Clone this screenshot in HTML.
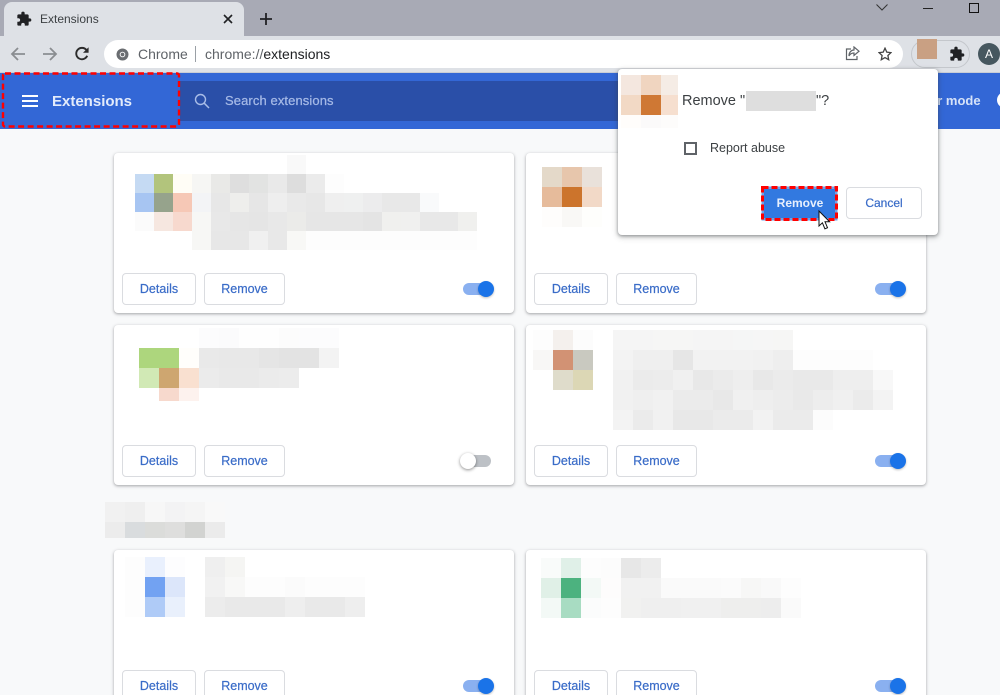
<!DOCTYPE html>
<html><head><meta charset="utf-8"><title>Extensions</title>
<style>
html,body{margin:0;padding:0;width:1000px;height:695px;overflow:hidden;background:#f8f9fa;font-family:"Liberation Sans",sans-serif}
#root{position:relative;width:1000px;height:695px;overflow:hidden;background:#f8f9fa}
.abs,.card,.btn,.tg,.tg i,.tg b{position:absolute}
#strip{position:absolute;left:0;top:0;width:1000px;height:36px;background:#a8aab5}
#tab{position:absolute;left:4px;top:2px;width:240px;height:34px;background:#dee1e6;border-radius:8px 8px 0 0}
#bar{position:absolute;left:0;top:36px;width:1000px;height:36px;background:#dee1e6}
#line{position:absolute;left:0;top:72px;width:1000px;height:1px;background:#c9cdd6}
#omni{position:absolute;left:104px;top:40px;width:799px;height:28px;background:#fff;border-radius:14px}
#pill{position:absolute;left:911px;top:40px;width:59px;height:28px;border:1px solid #c4c7cc;border-radius:15px;box-sizing:border-box}
#hdr{position:absolute;left:0;top:73px;width:1000px;height:56px;background:#3367d6}
#search{position:absolute;left:180px;top:81px;width:470px;height:40px;background:#2a4fa8}
.t{position:absolute;white-space:nowrap;line-height:1}
.card{width:400px;height:160px;background:#fff;border-radius:4px;box-shadow:0 1px 2px rgba(60,64,67,.3),0 1px 3px 1px rgba(60,64,67,.13)}
.btn{box-sizing:border-box;height:32px;top:120px;border:1px solid #dadce0;border-radius:4px;background:#fff;color:#3a6cc8;font-size:12.5px;line-height:30px;text-align:center;-webkit-text-stroke:.2px #3a6cc8}
.d{left:8px;width:74px}.r{left:90px;width:81px}
.tg{left:349px;top:130px;width:30px;height:12px}
.tg i{left:0;top:0;width:28px;height:12px;border-radius:6px;background:#8ab0f0}
.tg b{left:15px;top:-2px;width:16px;height:16px;border-radius:50%;background:#1a73e8;box-shadow:0 1px 2px rgba(0,0,0,.25)}
.tg.off i{background:#bdc1c6;left:4px;width:24px}
.tg.off b{left:-3px;background:#fff;box-shadow:0 1px 3px rgba(0,0,0,.45)}
#mos{position:absolute;left:0;top:0}
.a rect{width:19px;height:19px}
.b rect{width:20px;height:20px}
.c rect{width:20px;height:13px}
.e rect{width:20px;height:16px}
#dlg{position:absolute;left:618px;top:69px;width:320px;height:166px;background:#fff;border-radius:4px;box-shadow:0 1px 3px rgba(60,64,67,.5),0 2px 6px 1px rgba(60,64,67,.2)}
</style></head><body><div id="root">
<div id="strip"></div>
<div id="tab"></div>
<div id="bar"></div>
<div id="line"></div>
<div id="omni"></div>
<div id="pill"></div>
<div id="hdr"></div>
<div id="search"></div>

<svg class="abs" style="left:16px;top:11px" width="16" height="16" viewBox="0 0 24 24"><path fill="#202124" d="M20.5 11H19V7a2 2 0 0 0-2-2h-4V3.5a2.5 2.5 0 0 0-5 0V5H4a2 2 0 0 0-2 2v3.8h1.5a2.7 2.7 0 0 1 0 5.4H2V20a2 2 0 0 0 2 2h3.8v-1.5a2.7 2.7 0 0 1 5.4 0V22H17a2 2 0 0 0 2-2v-4h1.5a2.5 2.5 0 0 0 0-5z"/></svg>
<div class="t" style="left:40px;top:13px;font-size:12px;color:#3c4043">Extensions</div>
<svg class="abs" style="left:222px;top:13px" width="12" height="12" viewBox="0 0 12 12"><path d="M2 2l8 8M10 2l-8 8" stroke="#202124" stroke-width="1.6"/></svg>
<svg class="abs" style="left:259px;top:12px" width="14" height="14" viewBox="0 0 14 14"><path d="M7 1v12M1 7h12" stroke="#202124" stroke-width="1.8"/></svg>
<svg class="abs" style="left:875px;top:3px" width="14" height="9" viewBox="0 0 14 9"><path d="M1.5 1.5L7 7l5.5-5.5" stroke="#333" stroke-width="1" fill="none"/></svg>
<div class="abs" style="left:923px;top:8px;width:10px;height:1px;background:#222"></div>
<div class="abs" style="left:969px;top:3px;width:8px;height:8px;border:1px solid #111"></div>

<svg class="abs" style="left:10px;top:47px" width="16" height="14" viewBox="0 0 16 14"><path d="M15 7H2M8 1L2 7l6 6" stroke="#8a8d91" stroke-width="1.8" fill="none"/></svg>
<svg class="abs" style="left:42px;top:47px" width="16" height="14" viewBox="0 0 16 14"><path d="M1 7h13M8 1l6 6-6 6" stroke="#8a8d91" stroke-width="1.8" fill="none"/></svg>
<svg class="abs" style="left:74px;top:46px" width="16" height="16" viewBox="0 0 16 16"><path d="M13.2 9.8A5.7 5.7 0 1 1 12.4 4" stroke="#2b2b2b" stroke-width="1.9" fill="none"/><path d="M14.6 1.2v5.6H9z" fill="#2b2b2b"/></svg>
<svg class="abs" style="left:116px;top:48px" width="13" height="13" viewBox="0 0 13 13"><circle cx="6.5" cy="6.5" r="6" fill="#6a6d71"/><circle cx="6.5" cy="6.5" r="2.8" fill="#fff"/><circle cx="6.5" cy="6.5" r="1.9" fill="#6a6d71"/></svg>
<div class="t" style="left:138px;top:47px;font-size:14px;color:#5f6368">Chrome</div>
<div class="abs" style="left:195px;top:46px;width:1px;height:16px;background:#9aa0a6"></div>
<div class="t" style="left:205px;top:47px;font-size:14px;color:#5f6368">chrome://<span style="color:#202124">extensions</span></div>
<svg class="abs" style="left:845px;top:46px" width="15" height="15" viewBox="0 0 15 15"><path d="M6 3H1.5v10.5H12V10" stroke="#5f6368" stroke-width="1.2" fill="none"/><path d="M9 1l5 4.2-5 4.2V7C6.5 7 5 8 4 10c0-3.5 2-6 5-6z" stroke="#5f6368" stroke-width="1.2" fill="none"/></svg>
<svg class="abs" style="left:878px;top:47px" width="14" height="14" viewBox="0 0 14 14"><path d="M7 1.2l1.8 3.9 4.2.5-3.1 2.9.8 4.2L7 10.6l-3.7 2.1.8-4.2L1 5.6l4.2-.5z" stroke="#444" stroke-width="1.3" fill="none"/></svg>
<div class="abs" style="left:917px;top:39px;width:20px;height:20px;background:#c9a083"></div>
<svg class="abs" style="left:949px;top:46px" width="16" height="16" viewBox="0 0 24 24"><path fill="#202124" d="M20.5 11H19V7a2 2 0 0 0-2-2h-4V3.5a2.5 2.5 0 0 0-5 0V5H4a2 2 0 0 0-2 2v3.8h1.5a2.7 2.7 0 0 1 0 5.4H2V20a2 2 0 0 0 2 2h3.8v-1.5a2.7 2.7 0 0 1 5.4 0V22H17a2 2 0 0 0 2-2v-4h1.5a2.5 2.5 0 0 0 0-5z"/></svg>
<div class="abs" style="left:978px;top:43px;width:22px;height:22px;border-radius:50%;background:#46575f;color:#fff;font-size:12px;line-height:22px;text-align:center">A</div>

<div class="abs" style="left:22px;top:95px;width:16px;height:2px;background:#fff"></div>
<div class="abs" style="left:22px;top:100px;width:16px;height:2px;background:#fff"></div>
<div class="abs" style="left:22px;top:105px;width:16px;height:2px;background:#fff"></div>
<div class="t" style="left:52px;top:94px;font-size:15px;font-weight:bold;color:#e3ebfb">Extensions</div>
<svg class="abs" style="left:194px;top:93px" width="16" height="16" viewBox="0 0 16 16"><circle cx="6.5" cy="6.5" r="5" stroke="#a9bde8" stroke-width="1.4" fill="none"/><path d="M10.2 10.2L15 15" stroke="#a9bde8" stroke-width="1.5"/></svg>
<div class="t" style="left:225px;top:94px;font-size:13px;letter-spacing:.1px;color:#a5b9e6;-webkit-text-stroke:.25px #a5b9e6">Search extensions</div>
<div class="t" style="left:930px;top:94px;font-size:13px;font-weight:bold;color:#d6e2f8">er mode</div>
<div class="abs" style="left:997px;top:92px;width:16px;height:16px;border-radius:50%;background:#fff"></div>

<div class="card" style="left:114px;top:153px"><div class="btn d">Details</div><div class="btn r">Remove</div><div class="tg"><i></i><b></b></div></div>
<div class="card" style="left:526px;top:153px"><div class="btn d">Details</div><div class="btn r">Remove</div><div class="tg"><i></i><b></b></div></div>
<div class="card" style="left:114px;top:325px"><div class="btn d">Details</div><div class="btn r">Remove</div><div class="tg off"><i></i><b></b></div></div>
<div class="card" style="left:526px;top:325px"><div class="btn d">Details</div><div class="btn r">Remove</div><div class="tg"><i></i><b></b></div></div>
<div class="card" style="left:114px;top:550px"><div class="btn d">Details</div><div class="btn r">Remove</div><div class="tg"><i></i><b></b></div></div>
<div class="card" style="left:526px;top:550px"><div class="btn d">Details</div><div class="btn r">Remove</div><div class="tg"><i></i><b></b></div></div>

<svg id="mos" width="1000" height="695">
<g class="a">
<rect x="135" y="174" fill="#c5daf3"/><rect x="154" y="174" fill="#b2c47c"/><rect x="173" y="174" fill="#fffdf6"/><rect x="192" y="174" fill="#f6f6f4"/><rect x="211" y="174" fill="#e9e9e7"/><rect x="230" y="174" fill="#dedede"/><rect x="249" y="174" fill="#e2e3e2"/><rect x="268" y="174" fill="#e9e9e9"/><rect x="287" y="174" fill="#dddddd"/><rect x="306" y="174" fill="#ebebeb"/><rect x="325" y="174" fill="#fdfdfd"/>
<rect x="135" y="193" fill="#a7c5f2"/><rect x="154" y="193" fill="#96a38c"/><rect x="173" y="193" fill="#f6c8b6"/><rect x="192" y="193" fill="#f3f4f6"/><rect x="211" y="193" fill="#e7e7e7"/><rect x="230" y="193" fill="#eeeeec"/><rect x="249" y="193" fill="#e6e6e6"/><rect x="268" y="193" fill="#eeeeee"/><rect x="287" y="193" fill="#e9e9e9"/><rect x="306" y="193" fill="#e7e7e7"/><rect x="325" y="193" fill="#efefef"/><rect x="344" y="193" fill="#eff0f0"/><rect x="363" y="193" fill="#ececed"/><rect x="382" y="193" fill="#e8e8e8"/><rect x="401" y="193" fill="#e8e8e8"/><rect x="420" y="193" fill="#f9fafb"/>
<rect x="135" y="212" fill="#fbfbfb"/><rect x="154" y="212" fill="#f6e7e0"/><rect x="173" y="212" fill="#f7d9ce"/><rect x="192" y="212" fill="#f7f7f5"/><rect x="211" y="212" fill="#e8e8e8"/><rect x="230" y="212" fill="#e6e6e6"/><rect x="249" y="212" fill="#e5e5e5"/><rect x="268" y="212" fill="#e8e8e8"/><rect x="287" y="212" fill="#ebebe9"/><rect x="306" y="212" fill="#e6e6e6"/><rect x="325" y="212" fill="#e6e6e6"/><rect x="344" y="212" fill="#e6e6e6"/><rect x="363" y="212" fill="#e4e4e4"/><rect x="382" y="212" fill="#f0f0ee"/><rect x="401" y="212" fill="#f0f0ef"/><rect x="420" y="212" fill="#e8e8e8"/><rect x="439" y="212" fill="#e8e8e8"/><rect x="458" y="212" fill="#f0f0ee"/>
<rect x="192" y="231" fill="#f7f7f5"/><rect x="211" y="231" fill="#e7e7e7"/><rect x="230" y="231" fill="#e7e7e7"/><rect x="249" y="231" fill="#f0f0f0"/><rect x="268" y="231" fill="#e8e8e8"/><rect x="287" y="231" fill="#f8f8f6"/><rect x="306" y="231" fill="#fdfdfd"/><rect x="325" y="231" fill="#fdfdfd"/><rect x="344" y="231" fill="#fdfdfd"/><rect x="363" y="231" fill="#fdfdfd"/><rect x="382" y="231" fill="#fdfdfd"/><rect x="401" y="231" fill="#fdfdfd"/><rect x="420" y="231" fill="#fdfdfd"/><rect x="439" y="231" fill="#fdfdfd"/><rect x="458" y="231" fill="#fdfdfd"/>
<rect x="287" y="155" fill="#f9f9f9"/>
</g>
<g class="b">
<rect x="542" y="167" fill="#e4d9c9"/><rect x="562" y="167" fill="#e7c6ac"/><rect x="582" y="167" fill="#e9e1da"/>
<rect x="542" y="187" fill="#e6bb9b"/><rect x="562" y="187" fill="#cc742c"/><rect x="582" y="187" fill="#f2d9c7"/>
<rect x="542" y="207" fill="#fefdfc"/><rect x="562" y="207" fill="#f9f8f6"/><rect x="582" y="207" fill="#fefefc"/>

<rect x="199" y="328" fill="#fcfcfd"/><rect x="219" y="328" fill="#fbfbfc"/><rect x="239" y="328" fill="#fefefe"/><rect x="259" y="328" fill="#fefefe"/><rect x="279" y="328" fill="#fcfcfc"/><rect x="299" y="328" fill="#fcfcfd"/><rect x="319" y="328" fill="#fcfcfd"/>
<rect x="139" y="348" fill="#add67d"/><rect x="159" y="348" fill="#add67d"/><rect x="179" y="348" fill="#fffefb"/><rect x="199" y="348" fill="#e9e9e9"/><rect x="219" y="348" fill="#e8e8e8"/><rect x="239" y="348" fill="#e8e8e8"/><rect x="259" y="348" fill="#e5e5e5"/><rect x="279" y="348" fill="#e3e3e3"/><rect x="299" y="348" fill="#e3e3e3"/><rect x="319" y="348" fill="#f3f3f3"/>
<rect x="139" y="368" fill="#d1e9b5"/><rect x="159" y="368" fill="#cea670"/><rect x="179" y="368" fill="#f9e0d0"/><rect x="199" y="368" fill="#ebebeb"/><rect x="219" y="368" fill="#e9e9e9"/><rect x="239" y="368" fill="#e9e9e9"/><rect x="259" y="368" fill="#ebebeb"/><rect x="279" y="368" fill="#ececec"/>

<rect x="533" y="330" fill="#fdfdfd"/><rect x="553" y="330" fill="#f4f0ed"/><rect x="573" y="330" fill="#fcfcfc"/>
<rect x="533" y="350" fill="#f8f7f6"/><rect x="553" y="350" fill="#d29274"/><rect x="573" y="350" fill="#c9c9c0"/>
<rect x="553" y="370" fill="#dfdccb"/><rect x="573" y="370" fill="#dcd7b5"/>
<rect x="613" y="330" fill="#f5f5f5"/><rect x="633" y="330" fill="#f5f5f5"/><rect x="653" y="330" fill="#f6f6f5"/><rect x="673" y="330" fill="#f6f6f5"/><rect x="693" y="330" fill="#f5f5f5"/><rect x="713" y="330" fill="#f5f5f5"/><rect x="733" y="330" fill="#f5f6f6"/><rect x="753" y="330" fill="#f6f6f6"/><rect x="773" y="330" fill="#f6f6f5"/>
<rect x="613" y="350" fill="#f3f3f3"/><rect x="633" y="350" fill="#efefef"/><rect x="653" y="350" fill="#efefef"/><rect x="673" y="350" fill="#e6e6e6"/><rect x="693" y="350" fill="#f2f2f2"/><rect x="713" y="350" fill="#f2f2f2"/><rect x="733" y="350" fill="#f2f2f2"/><rect x="753" y="350" fill="#f1f1f1"/><rect x="773" y="350" fill="#eeeeee"/><rect x="793" y="350" fill="#fdfdfd"/><rect x="813" y="350" fill="#fdfdfd"/><rect x="833" y="350" fill="#fdfdfd"/><rect x="853" y="350" fill="#fdfdfd"/>
<rect x="613" y="370" fill="#f1f1f1"/><rect x="633" y="370" fill="#ebebeb"/><rect x="653" y="370" fill="#ececec"/><rect x="673" y="370" fill="#f0f0f0"/><rect x="693" y="370" fill="#e8e8e8"/><rect x="713" y="370" fill="#ebebeb"/><rect x="733" y="370" fill="#eeeeee"/><rect x="753" y="370" fill="#e8e8e8"/><rect x="773" y="370" fill="#ebebeb"/><rect x="793" y="370" fill="#e9e9e9"/><rect x="813" y="370" fill="#e9e9e9"/><rect x="833" y="370" fill="#eeeeee"/><rect x="853" y="370" fill="#eeeeee"/><rect x="873" y="370" fill="#f8f8f8"/>
<rect x="613" y="390" fill="#f1f1f1"/><rect x="633" y="390" fill="#efefef"/><rect x="653" y="390" fill="#f1f1f1"/><rect x="673" y="390" fill="#ebebeb"/><rect x="693" y="390" fill="#ebebeb"/><rect x="713" y="390" fill="#e8e8e8"/><rect x="733" y="390" fill="#f0f0f0"/><rect x="753" y="390" fill="#eeeeee"/><rect x="773" y="390" fill="#ececec"/><rect x="793" y="390" fill="#e9e9e9"/><rect x="813" y="390" fill="#ededed"/><rect x="833" y="390" fill="#f0f0f0"/><rect x="853" y="390" fill="#ebebeb"/><rect x="873" y="390" fill="#f3f3f3"/>
<rect x="613" y="410" fill="#f3f3f3"/><rect x="633" y="410" fill="#ebebeb"/><rect x="653" y="410" fill="#f1f1f1"/><rect x="673" y="410" fill="#e8e8e8"/><rect x="693" y="410" fill="#e8e8e8"/><rect x="713" y="410" fill="#ebebeb"/><rect x="733" y="410" fill="#ebebeb"/><rect x="753" y="410" fill="#f2f2f2"/><rect x="773" y="410" fill="#ebebeb"/><rect x="793" y="410" fill="#ebebeb"/><rect x="813" y="410" fill="#fcfcfc"/>

<rect x="105" y="502" fill="#f1f1f1"/><rect x="125" y="502" fill="#efefef"/><rect x="145" y="502" fill="#f7f7f7"/><rect x="165" y="502" fill="#f3f3f4"/><rect x="185" y="502" fill="#f5f5f5"/><rect x="205" y="502" fill="#f9f9f9"/>

<rect x="125" y="557" fill="#fdfdfd"/><rect x="145" y="557" fill="#e9f0fd"/><rect x="165" y="557" fill="#fdfdfe"/>
<rect x="125" y="577" fill="#fdfdfd"/><rect x="145" y="577" fill="#72a2f2"/><rect x="165" y="577" fill="#dce6fa"/>
<rect x="125" y="597" fill="#fdfdfd"/><rect x="145" y="597" fill="#afcbf7"/><rect x="165" y="597" fill="#e9f0fc"/>
<rect x="205" y="557" fill="#efefef"/><rect x="225" y="557" fill="#f5f5f3"/>
<rect x="205" y="577" fill="#f1f1f1"/><rect x="225" y="577" fill="#f8f8f7"/><rect x="245" y="577" fill="#fdfdfd"/><rect x="265" y="577" fill="#fdfdfd"/><rect x="285" y="577" fill="#fbfbfb"/><rect x="305" y="577" fill="#fdfdfd"/><rect x="325" y="577" fill="#fdfdfd"/><rect x="345" y="577" fill="#fdfdfd"/>
<rect x="205" y="597" fill="#ececec"/><rect x="225" y="597" fill="#e9e9e9"/><rect x="245" y="597" fill="#e9e9e9"/><rect x="265" y="597" fill="#e9e9e9"/><rect x="285" y="597" fill="#eeeeee"/><rect x="305" y="597" fill="#e9e9e9"/><rect x="325" y="597" fill="#e9e9e9"/><rect x="345" y="597" fill="#eeeeee"/>

<rect x="541" y="558" fill="#f9fbfa"/><rect x="561" y="558" fill="#e0f0e8"/><rect x="581" y="558" fill="#fdfdfd"/><rect x="601" y="558" fill="#fcfcfc"/><rect x="621" y="558" fill="#e7e7e7"/><rect x="641" y="558" fill="#ececec"/>
<rect x="541" y="578" fill="#e0f0e7"/><rect x="561" y="578" fill="#4cb27f"/><rect x="581" y="578" fill="#f3f9f6"/><rect x="601" y="578" fill="#fdfcfc"/><rect x="621" y="578" fill="#f1f1f1"/><rect x="641" y="578" fill="#f1f1f1"/><rect x="661" y="578" fill="#fafafa"/><rect x="681" y="578" fill="#fafafa"/><rect x="701" y="578" fill="#fafafa"/><rect x="721" y="578" fill="#fbfbfb"/><rect x="741" y="578" fill="#f7f7f6"/><rect x="761" y="578" fill="#f9f9f9"/><rect x="781" y="578" fill="#fdfdfd"/>
<rect x="541" y="598" fill="#f3f9f6"/><rect x="561" y="598" fill="#a8dcc2"/><rect x="581" y="598" fill="#fbfcfc"/><rect x="601" y="598" fill="#fdfdfd"/><rect x="621" y="598" fill="#f1f1f0"/><rect x="641" y="598" fill="#efefef"/><rect x="661" y="598" fill="#efefef"/><rect x="681" y="598" fill="#f0f0f0"/><rect x="701" y="598" fill="#f0f0f0"/><rect x="721" y="598" fill="#eeeeed"/><rect x="741" y="598" fill="#eeeeed"/><rect x="761" y="598" fill="#ededed"/><rect x="781" y="598" fill="#fafafa"/>
</g>
<g class="c">
<rect x="159" y="388" fill="#f7d9cd"/><rect x="179" y="388" fill="#fdf2ee"/>
</g>
<g class="e">
<rect x="105" y="522" fill="#ececec"/><rect x="125" y="522" fill="#d9dcde"/><rect x="145" y="522" fill="#dbdcda"/><rect x="165" y="522" fill="#dededd"/><rect x="185" y="522" fill="#d2d3d1"/><rect x="205" y="522" fill="#ebebeb"/>
</g>
</svg>

<div id="dlg"></div>
<svg class="abs" style="left:0;top:0" width="1000" height="695">
<g class="b">
<rect x="621" y="75" fill="#f4e7df"/><rect x="641" y="75" fill="#f0d5c0"/><rect x="661" y="75" style="width:17px" fill="#f5ece5"/>
<rect x="621" y="95" fill="#f2d9c5"/><rect x="641" y="95" fill="#cf7834"/><rect x="661" y="95" style="width:17px" fill="#f6dfcf"/>
</g>
<g class="c">
<rect x="621" y="115" fill="#fffdfb"/><rect x="641" y="115" fill="#fbfafa"/><rect x="661" y="115" style="width:17px" fill="#fdfcfb"/>
</g>
<rect x="746" y="91" width="70" height="20" fill="#dedede"/>
<rect x="761.5" y="186.5" width="76" height="34" fill="#6ea2e8"/>
<rect x="764" y="189" width="71" height="29" fill="#3279e0"/>
<rect x="762.5" y="187.5" width="74" height="32" fill="none" stroke="#f00" stroke-width="3" stroke-dasharray="6 3"/>
<rect x="3" y="73.5" width="176" height="53" rx="2" fill="none" stroke="#f00" stroke-width="2.4" stroke-dasharray="6 3.5"/>
<path d="M819 211v15l3.4-3.2 2.5 6 2.6-1.1-2.5-5.9h4.6z" fill="#fff" stroke="#111" stroke-width="1"/>
</svg>
<div class="t" style="left:682px;top:94px;font-size:14.5px;color:#3c4043">Remove "</div>
<div class="t" style="left:816px;top:94px;font-size:14.5px;color:#3c4043">"?</div>
<div class="abs" style="left:684px;top:142px;width:9px;height:9px;border:2px solid #5f6368"></div>
<div class="t" style="left:710px;top:142px;font-size:12.5px;color:#3c4043">Report abuse</div>
<div class="t" style="left:764px;top:197px;width:72px;text-align:center;font-size:12px;font-weight:bold;color:#e8f0fd">Remove</div>
<div class="abs" style="left:846px;top:187px;width:76px;height:32px;box-sizing:border-box;border:1px solid #dadce0;border-radius:4px;background:#fff;color:#3a6cc8;font-size:12px;line-height:30px;text-align:center;-webkit-text-stroke:.2px #3a6cc8">Cancel</div>
</div></body></html>
